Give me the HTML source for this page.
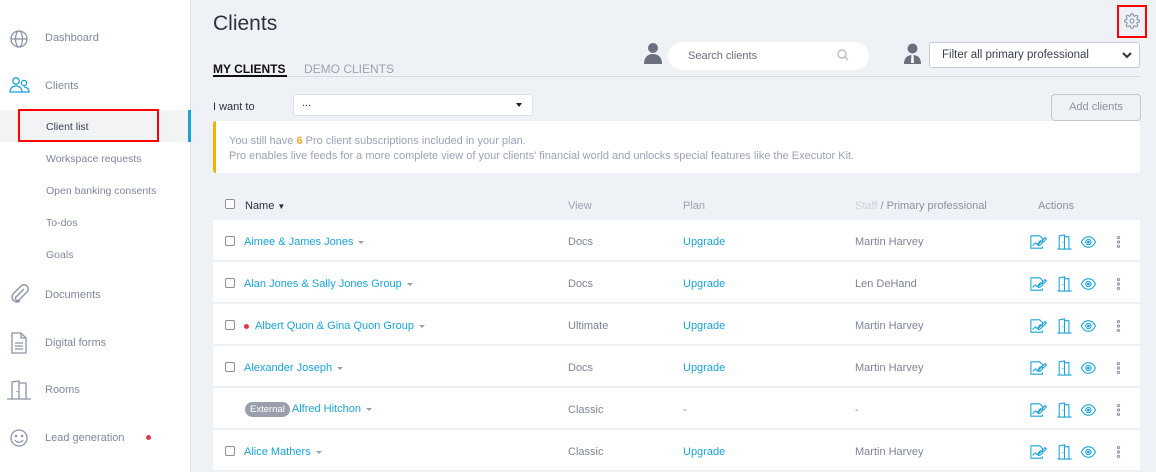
<!DOCTYPE html>
<html><head><meta charset="utf-8"><style>
*{margin:0;padding:0;box-sizing:border-box}
body{width:1156px;height:472px;overflow:hidden;background:#eef1f5;font-family:"Liberation Sans",sans-serif;font-size:11px;color:#7d8494;position:relative}
.a{position:absolute}
.sb{left:0;top:0;width:191px;height:472px;background:#fff;border-right:1px solid #e1e4ea}
.nav{position:absolute;left:45px;font-size:11px;color:#7f879a;white-space:nowrap}
.ic{position:absolute;left:9px}
.row{position:absolute;left:213px;width:927px;height:41px;background:#fff;border-bottom:1px solid #edf0f3}
.row>span{position:absolute;top:16px;white-space:nowrap}
.cb{position:absolute;left:12px;top:16px;width:10px;height:10px;border:1px solid #8a8f99;border-radius:2px;background:#fff}
.nm{left:31px;color:#1aa3d6}
.car{display:inline-block;margin-left:5px;border-left:3px solid transparent;border-right:3px solid transparent;border-top:3px solid #9aa0ab;vertical-align:middle}
.blue{color:#1aa3d6}
.ext{display:inline-block;background:#9aa0ab;color:#fff;border-radius:8px;padding:2px 5px;font-size:9.5px;font-weight:normal;margin-right:2px}
</style></head><body>
<div class="a sb">
  <svg class="ic" style="top:29px" width="20" height="20" viewBox="0 0 20 20" fill="none" stroke="#8a93a6" stroke-width="1.3"><circle cx="10" cy="10" r="8"/><ellipse cx="10" cy="10" rx="3.5" ry="8"/><path d="M2 10h16"/></svg>
  <div class="nav" style="top:32px">Dashboard</div>
  <svg class="ic" style="top:76px" width="22" height="18" viewBox="0 0 22 18" fill="none" stroke="#1aa3d6" stroke-width="1.3"><circle cx="7" cy="5" r="3.2"/><circle cx="15" cy="7" r="2.6"/><path d="M1 16c0-4 3-6 6-6s6 2 6 6z"/><path d="M13 16h7c0-3-2-5-5-5"/></svg>
  <div class="nav" style="top:80px">Clients</div>
  <div class="a" style="left:0;top:110px;width:190px;height:32px;background:#f1f3f5"></div>
  <div class="a" style="left:188px;top:110px;width:3px;height:32px;background:#1aa3d6"></div>
  <div class="a" style="left:18px;top:109px;width:141px;height:33px;border:2px solid #f00"></div>
  <div class="nav" style="top:121px;left:46px;color:#3a4256;font-size:10.5px">Client list</div>
  <div class="nav" style="top:153px;left:46px;font-size:10.5px">Workspace requests</div>
  <div class="nav" style="top:185px;left:46px;font-size:10.5px">Open banking consents</div>
  <div class="nav" style="top:217px;left:46px;font-size:10.5px">To-dos</div>
  <div class="nav" style="top:249px;left:46px;font-size:10.5px">Goals</div>
  <svg class="ic" style="top:284px" width="20" height="20" viewBox="0 0 20 20" fill="none" stroke="#8a93a6" stroke-width="1.4"><path d="M15 5l-8 8a2 2 0 0 0 3 3l8-8a4 4 0 0 0-6-6L4 10a5 5 0 0 0 7 7"/></svg>
  <div class="nav" style="top:289px">Documents</div>
  <svg class="ic" style="top:332px;left:11px" width="16" height="22" viewBox="0 0 16 22" fill="none" stroke="#8a93a6" stroke-width="1.3"><path d="M1 1h9l5 5v15H1z"/><path d="M10 1v5h5M4 11h8M4 14h8M4 17h8"/></svg>
  <div class="nav" style="top:337px">Digital forms</div>
  <svg class="ic" style="top:380px;left:7px" width="24" height="20" viewBox="0 0 24 20" fill="none" stroke="#8a93a6" stroke-width="1.3"><path d="M0 19h24M5 19V2l7-1v18M12 3h7v16M10 11v1"/></svg>
  <div class="nav" style="top:384px">Rooms</div>
  <svg class="ic" style="top:428px" width="20" height="20" viewBox="0 0 20 20" fill="none" stroke="#8a93a6" stroke-width="1.3"><circle cx="10" cy="10" r="8"/><circle cx="7" cy="8" r=".6" fill="#8a93a6"/><circle cx="13" cy="8" r=".6" fill="#8a93a6"/><path d="M6 12c2 3 6 3 8 0"/></svg>
  <div class="nav" style="top:432px">Lead generation</div>
  <div class="a" style="left:146px;top:435px;width:5px;height:5px;border-radius:50%;background:#e0394f"></div>
</div>

<div class="a" style="left:213px;top:12px;font-size:21px;color:#2d3240">Clients</div>
<div class="a" style="left:1117px;top:5px;width:30px;height:33px;border:2px solid #f00"></div>
<svg class="a" style="left:1124px;top:13px" width="16" height="16" viewBox="0 0 24 24" fill="none" stroke="#8a93a6" stroke-width="1.6"><circle cx="12" cy="12" r="3"/><path d="M19.4 15a1.7 1.7 0 0 0 .3 1.8l.1.1a2 2 0 1 1-2.8 2.8l-.1-.1a1.7 1.7 0 0 0-2.9 1.2V21a2 2 0 1 1-4 0v-.1a1.7 1.7 0 0 0-2.9-1.2l-.1.1a2 2 0 1 1-2.8-2.8l.1-.1A1.7 1.7 0 0 0 3.1 14H3a2 2 0 1 1 0-4h.1a1.7 1.7 0 0 0 1.2-2.9l-.1-.1a2 2 0 1 1 2.8-2.8l.1.1A1.7 1.7 0 0 0 10 3.1V3a2 2 0 1 1 4 0v.1a1.7 1.7 0 0 0 2.9 1.2l.1-.1a2 2 0 1 1 2.8 2.8l-.1.1A1.7 1.7 0 0 0 20.9 10H21a2 2 0 1 1 0 4h-.1a1.7 1.7 0 0 0-1.5 1z"/></svg>

<div class="a" style="left:213px;top:62px;font-size:12px;color:#111;font-weight:bold">MY CLIENTS</div>
<div class="a" style="left:213px;top:75px;width:74px;height:2px;background:#111"></div>
<div class="a" style="left:304px;top:62px;font-size:12px;color:#9aa2b4">DEMO CLIENTS</div>
<div class="a" style="left:287px;top:76px;width:853px;height:1px;background:#d6d9de"></div>

<svg class="a" style="left:644px;top:42px" width="18" height="22" viewBox="0 0 18 22" fill="#6b7080"><circle cx="9" cy="6" r="5"/><path d="M0 22c0-7 4-10 9-10s9 3 9 10z"/></svg>
<div class="a" style="left:668px;top:42px;width:201px;height:28px;background:#fff;border-radius:14px"></div>
<div class="a" style="left:688px;top:50px;color:#6b7080">Search clients</div>
<svg class="a" style="left:837px;top:49px" width="12" height="12" viewBox="0 0 12 12" fill="none" stroke="#b0b5bf" stroke-width="1.2"><circle cx="5" cy="5" r="4"/><path d="M8 8l3 3"/></svg>
<svg class="a" style="left:904px;top:43px" width="17" height="21" viewBox="0 0 17 21" fill="#6b7080"><circle cx="8.5" cy="5.5" r="5"/><path d="M0 21c0-6 3-9 8.5-9S17 15 17 21z"/><path d="M7.5 12h2l.5 8h-3z" fill="#fff"/></svg>
<div class="a" style="left:929px;top:42px;width:211px;height:26px;background:#fff;border:1px solid #c9cdd4;border-radius:3px"></div>
<div class="a" style="left:942px;top:49px;font-size:11.5px;color:#3a4050">Filter all primary professional</div>
<svg class="a" style="left:1122px;top:52px" width="10" height="7" viewBox="0 0 10 7" fill="none" stroke="#333" stroke-width="2"><path d="M1 1l4 4 4-4"/></svg>

<div class="a" style="left:213px;top:101px;color:#2d3240">I want to</div>
<div class="a" style="left:293px;top:94px;width:240px;height:22px;background:#fff;border:1px solid #dde0e5;border-radius:3px"></div>
<div class="a" style="left:302px;top:97px;color:#333">...</div>
<div class="a" style="left:516px;top:103px;border-left:3px solid transparent;border-right:3px solid transparent;border-top:4px solid #222"></div>
<div class="a" style="left:1051px;top:94px;width:90px;height:27px;border:1px solid #c2c7d0;border-radius:4px;color:#8a93a6;text-align:center;line-height:25px">Add clients</div>

<div class="a" style="left:213px;top:121px;width:927px;height:52px;background:#fff;border-left:3px solid #f5b100;border-radius:3px"></div>
<div class="a" style="left:229px;top:134px;color:#9aa2b4;line-height:15px">You still have <b style="color:#f5a623">6</b> Pro client subscriptions included in your plan.<br>Pro enables live feeds for a more complete view of your clients' financial world and unlocks special features like the Executor Kit.</div>

<div class="a" style="left:225px;top:199px;width:10px;height:10px;border:1px solid #8a8f99;border-radius:2px;background:#fff"></div>
<div class="a" style="left:245px;top:200px;color:#2d3240">Name <span style="font-size:8px">&#9660;</span></div>
<div class="a" style="left:568px;top:200px;color:#9aa2b4">View</div>
<div class="a" style="left:683px;top:200px;color:#9aa2b4">Plan</div>
<div class="a" style="left:855px;top:200px;color:#8a93a6"><span style="color:#cdd2da">Staff</span> / Primary professional</div>
<div class="a" style="left:1038px;top:200px;color:#8a93a6">Actions</div>

<div id="rows"></div>
<script>
var d=[["Aimee &amp; James Jones","Docs","Upgrade","Martin Harvey",0],["Alan Jones &amp; Sally Jones Group","Docs","Upgrade","Len DeHand",0],["Albert Quon &amp; Gina Quon Group","Ultimate","Upgrade","Martin Harvey",1],["Alexander Joseph","Docs","Upgrade","Martin Harvey",0],["Alfred Hitchon","Classic","-","-",2],["Alice Mathers","Classic","Upgrade","Martin Harvey",0]];
var ic='<svg style="position:absolute;left:817px;top:14px" width="92" height="16" viewBox="0 0 104 18" fill="none" stroke="#1aa3d6" stroke-width="1.2"><path d="M1 2h10l3 3v4M1 2v14h13v-2M3 13l3-3 2 2 4-5M10 11l7-7 1.5 1.5-7 7-2 .5z"/><path d="M31 17h16M33 17V2l6-1v16M39 3h5v14M37 9v1"/><path d="M58 9c2-4 5-6 8-6s6 2 8 6c-2 4-5 6-8 6s-6-2-8-6z"/><circle cx="66" cy="9" r="3"/><circle cx="66" cy="9" r="1" fill="#1aa3d6"/><g stroke="#8a93a6"><circle cx="100" cy="4" r="1.2"/><circle cx="100" cy="9" r="1.2"/><circle cx="100" cy="14" r="1.2"/></g></svg>';
var h='';d.forEach(function(r,i){var t=220+i*42;var n;
if(r[4]==2)n='<span class="nm" style="left:32px;top:14px"><b class="ext">External</b><span style="font-weight:normal">'+r[0]+'</span><i class="car"></i></span>';
else if(r[4]==1)n='<div class="cb"></div><span class="nm"><i style="display:inline-block;width:5px;height:5px;border-radius:50%;background:#e0394f;margin-right:6px;vertical-align:middle"></i>'+r[0]+'<i class="car"></i></span>';
else n='<div class="cb"></div><span class="nm">'+r[0]+'<i class="car"></i></span>';
h+='<div class="row" style="top:'+t+'px">'+n+'<span style="left:355px">'+r[1]+'</span><span style="left:470px" class="'+(r[2]=="Upgrade"?"blue":"")+'">'+r[2]+'</span><span style="left:642px">'+r[3]+'</span>'+ic+'</div>';});
document.getElementById('rows').innerHTML=h;
</script>
</body></html>
